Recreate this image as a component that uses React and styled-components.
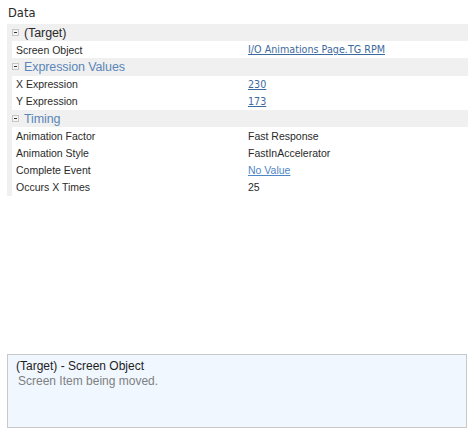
import React from 'react';
import styled, { createGlobalStyle } from 'styled-components';

const GlobalStyle = createGlobalStyle`
  body {
    margin: 0;
    background: #fff;
    font-family: "Liberation Sans", Arial, sans-serif;
  }
`;

const ROWS = [
  { cat: '(Target)', dark: true },
  { name: 'Screen Object', value: 'I/O Animations Page.TG RPM', link: true },
  { cat: 'Expression Values' },
  { name: 'X Expression', value: '230', link: true },
  { name: 'Y Expression', value: '173', link: true },
  { cat: 'Timing' },
  { name: 'Animation Factor', value: 'Fast Response' },
  { name: 'Animation Style', value: 'FastInAccelerator' },
  { name: 'Complete Event', value: 'No Value', link: true, light: true },
  { name: 'Occurs X Times', value: '25' },
];

const App = () => {
  return (
    <Page>
      <GlobalStyle />
      <Header>Data</Header>
      <Grid>
        {ROWS.map((row, idx) =>
          row.cat ? (
            <CategoryRow key={idx}>
              <Toggle>
                <svg width="7" height="7" viewBox="0 0 7 7">
                  <rect x="0.5" y="0.5" width="6" height="6" fill="#f4f4f4" stroke="#c6c6c6" />
                  <line x1="2" y1="3.5" x2="5" y2="3.5" stroke="#333" />
                </svg>
              </Toggle>
              <CategoryLabel $dark={row.dark}>{row.cat}</CategoryLabel>
            </CategoryRow>
          ) : (
            <PropRow key={idx}>
              <Margin />
              <PropName>{row.name}</PropName>
              <PropValue $link={row.link} $light={row.light}>
                {row.value}
              </PropValue>
            </PropRow>
          )
        )}
      </Grid>
      <Spacer />
      <Description>
        <DescTitle>(Target) - Screen Object</DescTitle>
        <DescText>Screen Item being moved.</DescText>
      </Description>
    </Page>
  );
};

const Page = styled.div`
  width: 474px;
  height: 434px;
  display: flex;
  flex-direction: column;
  box-sizing: border-box;
  padding: 5px 6px 6px 7px;
`;

const Header = styled.div`
  font-family: Tahoma, "DejaVu Sans", sans-serif;
  font-size: 11.5px;
  color: #2a2a2a;
  height: 19px;
  line-height: 16px;
  padding-left: 1px;
`;

const Grid = styled.div`
  display: flex;
  flex-direction: column;
  width: 461px;
`;

const CategoryRow = styled.div`
  height: 17.2px;
  display: flex;
  align-items: center;
  background: #f0f0f0;
`;

const Toggle = styled.span`
  width: 14px;
  display: flex;
  justify-content: center;
  padding-left: 1px;
  margin-right: 2px;
  svg {
    display: block;
  }
`;

const CategoryLabel = styled.span`
  font-size: 12.5px;
  color: ${p => (p.$dark ? '#2a2a2a' : '#5b86b8')};
  letter-spacing: -0.1px;
`;

const PropRow = styled.div`
  height: 17.2px;
  display: flex;
  align-items: center;
  font-size: 10.5px;
  color: #2a2a2a;
`;

const Margin = styled.span`
  width: 5px;
  align-self: stretch;
  background: #f0f0f0;
  margin-right: 4px;
`;

const PropName = styled.span`
  width: 232px;
`;

const PropValue = styled.span`
  color: ${p => (p.$link ? (p.$light ? '#4e86c6' : '#3d6a9c') : '#2a2a2a')};
  text-decoration: ${p => (p.$link ? 'underline' : 'none')};
  font-family: ${p => (p.$link && !p.$light ? 'Verdana, "DejaVu Sans", sans-serif' : 'inherit')};
  font-size: ${p => (p.$link && !p.$light ? '9.6px' : 'inherit')};
`;

const Spacer = styled.div`
  flex: 1;
`;

const Description = styled.div`
  height: 74px;
  width: 460px;
  box-sizing: border-box;
  border: 1px solid #c8c8c8;
  background: #f0f7ff;
  padding: 4px 8px;
`;

const DescTitle = styled.div`
  font-size: 12px;
  color: #1e1e1e;
  line-height: 15px;
`;

const DescText = styled.div`
  font-size: 12px;
  color: #7f7f7f;
  line-height: 15px;
  padding-left: 2px;
`;

export default App;
